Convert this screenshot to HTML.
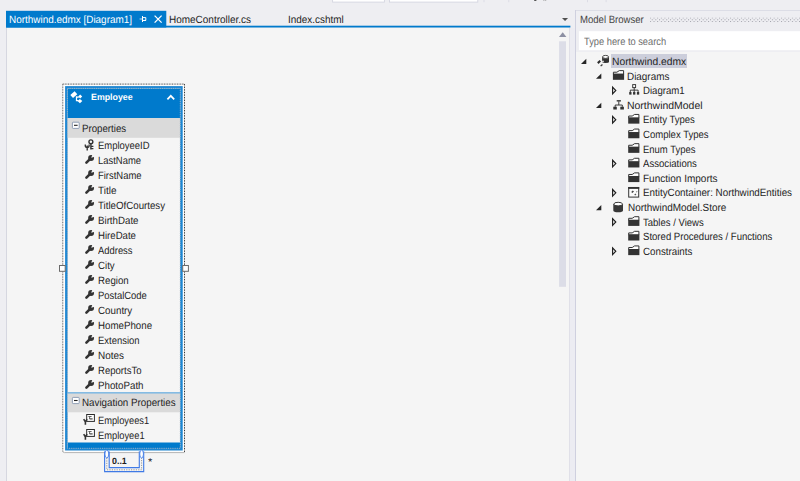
<!DOCTYPE html>
<html><head><meta charset="utf-8"><title>Northwind.edmx</title>
<style>
html,body{margin:0;padding:0;}
body{width:800px;height:481px;overflow:hidden;position:relative;background:#eeeef2;font-family:"Liberation Sans",sans-serif;}
.a{position:absolute;}
.t{position:absolute;transform-origin:0 0;text-rendering:geometricPrecision;white-space:pre;line-height:16px;height:16px;font-family:"Liberation Sans",sans-serif;}
svg{position:absolute;overflow:visible;}
</style></head><body>
<!-- top toolbar remnants -->
<svg style="left:0;top:0" width="800" height="6" viewBox="0 0 800 6">
<rect x="332.6" y="-1" width="51.8" height="3.1" fill="#fff" stroke="#d4d5e0" stroke-width="0.9"/>
<rect x="389.5" y="-1" width="88.3" height="3.1" fill="#fff" stroke="#d4d5e0" stroke-width="0.9"/>
<rect x="483.5" y="0" width="1" height="2.2" fill="#dcdce5"/>
<rect x="508.3" y="0" width="1" height="2.2" fill="#dcdce5"/>
<rect x="587" y="0" width="1" height="2.2" fill="#dcdce5"/>
<rect x="605.6" y="0" width="1" height="2.2" fill="#dcdce5"/>
<rect x="534.2" y="0" width="2.2" height="1" fill="#555"/>
<rect x="543.4" y="0" width="1" height="0.8" fill="#999"/><rect x="545.2" y="0" width="1" height="0.8" fill="#999"/>
</svg>

<!-- tab strip -->
<svg style="left:0;top:0" width="800" height="40" viewBox="0 0 800 40"><rect x="6" y="10.8" width="160.3" height="16.7" fill="#007acc"/><rect x="6" y="25.7" width="564.4" height="1.8" fill="#007acc"/></svg>
<!-- pin -->
<svg style="left:139px;top:15px" width="9" height="9" viewBox="0 0 9 9"><path d="M0.6 4H3.5" stroke="#cfe4f5" stroke-width="0.9" fill="none"/><path d="M3.5 1V7M3.5 2.6H6.8V5.4H3.5M3.5 5.5H6.8" stroke="#fff" stroke-width="1" fill="none"/></svg>
<!-- close -->
<svg style="left:154px;top:14.6px" width="9" height="9" viewBox="0 0 9 9"><path d="M0.6 0.6L7.6 7.6M7.6 0.6L0.6 7.6" stroke="#fff" stroke-width="1.3" fill="none"/></svg>
<!-- tab dropdown arrow -->
<svg style="left:561.6px;top:18px" width="7" height="4" viewBox="0 0 7 4"><path d="M0 0H6.1L3.05 3.1Z" fill="#505050"/></svg>

<!-- diagram surface -->
<div class="a" style="left:6px;top:28px;width:564px;height:453px;background:#f5f5f5"></div>
<div class="a" style="left:6px;top:28px;width:1px;height:453px;background:#d6d7e0"></div>
<!-- scrollbar -->
<svg style="left:559px;top:32px" width="8" height="5" viewBox="0 0 8 5"><path d="M0 5H7.4L3.7 0.3Z" fill="#8d90a3"/></svg>
<svg style="left:0;top:0" width="800" height="300" viewBox="0 0 800 300"><rect x="559.1" y="41.3" width="6.9" height="245.5" fill="#dcdde7"/></svg>
<!-- splitter -->
<div class="a" style="left:569px;top:28px;width:7px;height:453px;background:#ececf2"></div>
<div class="a" style="left:569px;top:28px;width:1px;height:453px;background:#e0e0e8"></div>
<div class="a" style="left:575px;top:10px;width:1px;height:471px;background:#cfd0df"></div>

<!-- model browser -->
<div class="a" style="left:576px;top:52px;width:224px;height:429px;background:#f5f5f5"></div>
<div class="a" style="left:576px;top:10px;width:224px;height:1px;background:#dcdde6"></div>
<svg style="left:0;top:0" width="800" height="60" viewBox="0 0 800 60"><rect x="578.9" y="31.2" width="222" height="19" fill="#fff"/></svg>
<!-- grip dots -->
<svg style="left:0;top:0" width="800" height="30" viewBox="0 0 800 30"><defs><pattern id="gp" width="4" height="4" patternUnits="userSpaceOnUse" patternTransform="translate(649.9 17.5) scale(0.91)"><rect x="0" y="0" width="1.1" height="1.1" fill="#9a9aa4"/><rect x="2" y="2" width="1.1" height="1.1" fill="#9a9aa4"/></pattern></defs><rect x="649.9" y="17.5" width="150.1" height="4.7" fill="url(#gp)"/></svg>
<!-- selected node -->
<div class="a" style="left:611px;top:54px;width:76px;height:14px;background:#cccedb"></div>

<!-- entity shape -->
<svg style="left:0;top:0" width="570" height="481" viewBox="0 0 570 481">
  <!-- selection -->
  <rect x="62.7" y="83.9" width="121.8" height="368.7" fill="#fdfdfd"/>
  <path d="M62.7 84.1H184.5" stroke="#c4c4c4" stroke-width="1"/>
  <path d="M62.7 84.1H184.5" stroke="#6a6a6a" stroke-width="1" stroke-dasharray="1.1 1.5"/>
  <path d="M62.75 84.1V451.5" stroke="#d2d2d2" stroke-width="1"/>
  <path d="M62.75 84.1V451.5" stroke="#777" stroke-width="1" stroke-dasharray="1.1 1.5"/>
  <path d="M184.5 84.1V452.6" stroke="#d8d8d8" stroke-width="1"/>
  <path d="M184.5 84.1V452.6" stroke="#333" stroke-width="1" stroke-dasharray="1.2 1.4"/>
  <path d="M62.75 451 Q62.75 452.6 64.4 452.6 H184.5" stroke="#b4b4b4" stroke-width="1" fill="none"/>
  <!-- body -->
  <rect x="65.1" y="86.1" width="117.6" height="364.4" fill="#1c86d2"/>
  <rect x="67.6" y="88.6" width="112.5" height="359.4" fill="#f5f5f5"/>
  <!-- header -->
  <rect x="67.6" y="88.6" width="112.5" height="29.4" fill="#007acc"/>
  <!-- properties header -->
  <rect x="67.6" y="118" width="112.5" height="19.8" fill="#dadada"/>
  <!-- nav separator + header -->
  <rect x="67.6" y="392.4" width="112.5" height="1.2" fill="#3a96d8"/>
  <rect x="67.6" y="393.6" width="112.5" height="18.7" fill="#dadada"/>
  <!-- bottom bar -->
  <rect x="67.6" y="442.5" width="112.5" height="5.5" fill="#007acc"/>
  <!-- inner dotted line -->
  <rect x="67.4" y="88.4" width="112.9" height="359.9" fill="none" stroke="#a9b6c2" stroke-width="0.9" stroke-dasharray="1.1 1.1"/>
  <!-- side handles -->
  <rect x="59.5" y="265.5" width="5.7" height="5.8" fill="#fff" stroke="#6a6a6a" stroke-width="1"/>
  <rect x="182.7" y="265.5" width="5.7" height="5.8" fill="#fff" stroke="#6a6a6a" stroke-width="1"/>
</svg>

<!-- icons -->
<svg style="left:0;top:0" width="800" height="481" viewBox="0 0 800 481">
<path d="M70.3 95 L74.6 91.3 L77.3 94.3 L73 98 Z" fill="#fff"/>
<path d="M78.2 96.5 L80.2 94.6 L82.2 96.5 L80.2 98.4 Z" fill="#fff"/>
<path d="M77.5 101.1 L79.9 99 L82.3 101.1 L79.9 103.2 Z" fill="#fff"/>
<path d="M76.5 96.2 V100.6 H78.4 M76.5 97 H78.8" stroke="#fff" stroke-width="1.25" fill="none"/>
<path d="M167.4 99.4 L170.8 95.8 L174.2 99.4" stroke="#fff" stroke-width="1.7" fill="none"/>
<rect x="72.4" y="122.2" width="6.8" height="6.2" rx="0.8" fill="#fff" stroke="#8496b0" stroke-width="0.9"/><path d="M74 125.3 H77.6" stroke="#222" stroke-width="1.1"/>
<rect x="72.4" y="397.4" width="6.8" height="6.2" rx="0.8" fill="#fff" stroke="#8496b0" stroke-width="0.9"/><path d="M74 400.5 H77.6" stroke="#222" stroke-width="1.1"/>
<circle cx="90.9" cy="141.8" r="1.95" stroke="#333" stroke-width="1.4" fill="none"/><path d="M90.9 143.7 V149.6 M90.9 146.4 H93.4 M90.9 148.6 H93.4" stroke="#333" stroke-width="1.4" fill="none"/><path d="M85.3 144.5 V145.8 Q85.3 147.6 87.2 147.6 Q89.1 147.6 89.1 145.8 V144.5 M87.2 145.4 V150.5" stroke="#333" stroke-width="1.35" fill="none"/>
<path d="M86.4 162.7 L90.4 158.7" stroke="#333" stroke-width="2.6" stroke-linecap="round" fill="none"/><circle cx="91.1" cy="158" r="2.95" fill="#333"/><path d="M91.1 157.8 L92.8 154 L95.4 156.4 Z" fill="#f5f5f5"/>
<path d="M86.4 177.7 L90.4 173.7" stroke="#333" stroke-width="2.6" stroke-linecap="round" fill="none"/><circle cx="91.1" cy="173" r="2.95" fill="#333"/><path d="M91.1 172.8 L92.8 169 L95.4 171.4 Z" fill="#f5f5f5"/>
<path d="M86.4 192.7 L90.4 188.7" stroke="#333" stroke-width="2.6" stroke-linecap="round" fill="none"/><circle cx="91.1" cy="188" r="2.95" fill="#333"/><path d="M91.1 187.8 L92.8 184 L95.4 186.4 Z" fill="#f5f5f5"/>
<path d="M86.4 207.7 L90.4 203.7" stroke="#333" stroke-width="2.6" stroke-linecap="round" fill="none"/><circle cx="91.1" cy="203" r="2.95" fill="#333"/><path d="M91.1 202.8 L92.8 199 L95.4 201.4 Z" fill="#f5f5f5"/>
<path d="M86.4 222.7 L90.4 218.7" stroke="#333" stroke-width="2.6" stroke-linecap="round" fill="none"/><circle cx="91.1" cy="218" r="2.95" fill="#333"/><path d="M91.1 217.8 L92.8 214 L95.4 216.4 Z" fill="#f5f5f5"/>
<path d="M86.4 237.7 L90.4 233.7" stroke="#333" stroke-width="2.6" stroke-linecap="round" fill="none"/><circle cx="91.1" cy="233" r="2.95" fill="#333"/><path d="M91.1 232.8 L92.8 229 L95.4 231.4 Z" fill="#f5f5f5"/>
<path d="M86.4 252.7 L90.4 248.7" stroke="#333" stroke-width="2.6" stroke-linecap="round" fill="none"/><circle cx="91.1" cy="248" r="2.95" fill="#333"/><path d="M91.1 247.8 L92.8 244 L95.4 246.4 Z" fill="#f5f5f5"/>
<path d="M86.4 267.7 L90.4 263.7" stroke="#333" stroke-width="2.6" stroke-linecap="round" fill="none"/><circle cx="91.1" cy="263" r="2.95" fill="#333"/><path d="M91.1 262.8 L92.8 259 L95.4 261.4 Z" fill="#f5f5f5"/>
<path d="M86.4 282.7 L90.4 278.7" stroke="#333" stroke-width="2.6" stroke-linecap="round" fill="none"/><circle cx="91.1" cy="278" r="2.95" fill="#333"/><path d="M91.1 277.8 L92.8 274 L95.4 276.4 Z" fill="#f5f5f5"/>
<path d="M86.4 297.7 L90.4 293.7" stroke="#333" stroke-width="2.6" stroke-linecap="round" fill="none"/><circle cx="91.1" cy="293" r="2.95" fill="#333"/><path d="M91.1 292.8 L92.8 289 L95.4 291.4 Z" fill="#f5f5f5"/>
<path d="M86.4 312.7 L90.4 308.7" stroke="#333" stroke-width="2.6" stroke-linecap="round" fill="none"/><circle cx="91.1" cy="308" r="2.95" fill="#333"/><path d="M91.1 307.8 L92.8 304 L95.4 306.4 Z" fill="#f5f5f5"/>
<path d="M86.4 327.7 L90.4 323.7" stroke="#333" stroke-width="2.6" stroke-linecap="round" fill="none"/><circle cx="91.1" cy="323" r="2.95" fill="#333"/><path d="M91.1 322.8 L92.8 319 L95.4 321.4 Z" fill="#f5f5f5"/>
<path d="M86.4 342.7 L90.4 338.7" stroke="#333" stroke-width="2.6" stroke-linecap="round" fill="none"/><circle cx="91.1" cy="338" r="2.95" fill="#333"/><path d="M91.1 337.8 L92.8 334 L95.4 336.4 Z" fill="#f5f5f5"/>
<path d="M86.4 357.7 L90.4 353.7" stroke="#333" stroke-width="2.6" stroke-linecap="round" fill="none"/><circle cx="91.1" cy="353" r="2.95" fill="#333"/><path d="M91.1 352.8 L92.8 349 L95.4 351.4 Z" fill="#f5f5f5"/>
<path d="M86.4 372.7 L90.4 368.7" stroke="#333" stroke-width="2.6" stroke-linecap="round" fill="none"/><circle cx="91.1" cy="368" r="2.95" fill="#333"/><path d="M91.1 367.8 L92.8 364 L95.4 366.4 Z" fill="#f5f5f5"/>
<path d="M86.4 387.7 L90.4 383.7" stroke="#333" stroke-width="2.6" stroke-linecap="round" fill="none"/><circle cx="91.1" cy="383" r="2.95" fill="#333"/><path d="M91.1 382.8 L92.8 379 L95.4 381.4 Z" fill="#f5f5f5"/>
<rect x="86.7" y="414.5" width="7.7" height="6.9" fill="#fff" stroke="#2a2a2a" stroke-width="1"/><path d="M88.4 416.5 H91.6 M89.6 416.6 V419" stroke="#555" stroke-width="0.9" fill="none"/><rect x="89.6" y="418.3" width="3" height="1.2" fill="#444"/><path d="M83.7 419.2 L85.4 422 L87.1 419.2 M85.4 421.6 V424.7" stroke="#333" stroke-width="1.6" fill="none"/>
<rect x="86.7" y="429.5" width="7.7" height="6.9" fill="#fff" stroke="#2a2a2a" stroke-width="1"/><path d="M88.4 431.5 H91.6 M89.6 431.6 V434" stroke="#555" stroke-width="0.9" fill="none"/><rect x="89.6" y="433.3" width="3" height="1.2" fill="#444"/><path d="M83.7 434.2 L85.4 437 L87.1 434.2 M85.4 436.6 V439.7" stroke="#333" stroke-width="1.6" fill="none"/>
<path d="M104.6 451.5 V471.6 H143.7 V451.5 M109.2 451.5 V467.6 H139.3 V451.5" stroke="#3f7ae6" stroke-width="1.1" fill="none"/><path d="M106.8 458 V469.8 H141.6 V458" stroke="#999" stroke-width="1" stroke-dasharray="1.2 1.2" fill="none"/><ellipse cx="106.8" cy="454" rx="1.9" ry="3.9" fill="#fff" stroke="#3f7ae6" stroke-width="0.9"/><ellipse cx="141.6" cy="454" rx="1.9" ry="3.9" fill="#fff" stroke="#3f7ae6" stroke-width="0.9"/>
<path d="M586.3 58.8 V64.1 H581 Z" fill="#262626"/>
<path d="M602.1 56.9 V61.7 A3.45 1.2 0 0 0 609 61.7 V56.9 Z" fill="#333"/><ellipse cx="605.55" cy="56.9" rx="3" ry="1.5" fill="#fff" stroke="#333" stroke-width="0.9"/><path d="M597.1 62.3 L599.6 60 L601 61.6 L598.5 64 Z" fill="#2c2c2c"/><path d="M600.2 65.7 L602 64.1 L602.9 65 L601.1 66.5 Z" fill="#3a3a3a"/><path d="M601.7 61.5 L603.1 60.3 L604.1 61.7 L602.7 62.8 Z" fill="#ddd"/>
<path d="M601.3 73.41 V78.71 H596 Z" fill="#262626"/>
<path d="M613.4 74.21 V72.21 H616.9 L619.3 70.61 H623.6 V74.21 Z" fill="#fff" stroke="#333" stroke-width="1"/><rect x="612.9" y="73.81" width="11.2" height="6" fill="#333"/>
<path d="M612.6 87.22 L615.8 90.52 L612.6 93.82 Z" fill="none" stroke="#1e1e1e" stroke-width="1.15"/>
<rect x="632.7" y="84.62" width="2.9" height="3" fill="#fff" stroke="#333" stroke-width="0.95"/><path d="M634.2 87.62 V90.12 M630.3 92.12 V90.12 H638.1 V92.12 M634.2 90.12 V92.12" stroke="#333" stroke-width="0.95" fill="none"/><rect x="629.2" y="92.02" width="2.3" height="2.6" fill="#333"/><rect x="633.05" y="92.02" width="2.3" height="2.6" fill="#333"/><rect x="636.9" y="92.02" width="2.3" height="2.6" fill="#333"/>
<path d="M601.3 102.63 V107.93 H596 Z" fill="#262626"/>
<rect x="616.7" y="100.13" width="4.2" height="1.4" fill="#333"/><path d="M618.8 101.33 V105.03 M615.2 106.83 V105.03 H622.3 V106.83" stroke="#333" stroke-width="0.95" fill="none"/><rect x="613.3" y="106.73" width="3.5" height="2.8" fill="#333"/><rect x="620.3" y="106.73" width="3.6" height="2.8" fill="#333"/>
<path d="M612.6 116.44 L615.8 119.74 L612.6 123.04 Z" fill="none" stroke="#1e1e1e" stroke-width="1.15"/>
<path d="M628.7 118.04 V116.04 H632.2 L634.6 114.44 H638.9 V118.04 Z" fill="#fff" stroke="#333" stroke-width="1"/><rect x="628.2" y="117.64" width="11.2" height="6" fill="#333"/>
<path d="M628.7 132.65 V130.65 H632.2 L634.6 129.05 H638.9 V132.65 Z" fill="#fff" stroke="#333" stroke-width="1"/><rect x="628.2" y="132.25" width="11.2" height="6" fill="#333"/>
<path d="M628.7 147.26 V145.26 H632.2 L634.6 143.66 H638.9 V147.26 Z" fill="#fff" stroke="#333" stroke-width="1"/><rect x="628.2" y="146.86" width="11.2" height="6" fill="#333"/>
<path d="M612.6 160.27 L615.8 163.57 L612.6 166.87 Z" fill="none" stroke="#1e1e1e" stroke-width="1.15"/>
<path d="M628.7 161.87 V159.87 H632.2 L634.6 158.27 H638.9 V161.87 Z" fill="#fff" stroke="#333" stroke-width="1"/><rect x="628.2" y="161.47" width="11.2" height="6" fill="#333"/>
<path d="M628.7 176.48 V174.48 H632.2 L634.6 172.88 H638.9 V176.48 Z" fill="#fff" stroke="#333" stroke-width="1"/><rect x="628.2" y="176.08" width="11.2" height="6" fill="#333"/>
<path d="M612.6 189.49 L615.8 192.79 L612.6 196.09 Z" fill="none" stroke="#1e1e1e" stroke-width="1.15"/>
<rect x="628.7" y="187.49" width="10" height="9.6" fill="#fbfbfb" stroke="#333" stroke-width="1"/><rect x="628.2" y="186.99" width="11" height="1.9" fill="#333"/><path d="M631.2 191.99 L632.8 190.49 L634 191.49 L632.4 192.99 Z" fill="#444"/><path d="M634.2 194.79 L635.4 193.59 L636.4 194.39 L635.2 195.59 Z" fill="#555"/><path d="M636 191.99 L636.9 190.89 L637.5 191.49 L636.6 192.59 Z" fill="#666"/>
<path d="M601.3 204.9 V210.2 H596 Z" fill="#262626"/>
<path d="M613.3 204.1 V210.5 A4.85 1.8 0 0 0 623 210.5 V204.1 Z" fill="#383838"/><ellipse cx="618.15" cy="204.1" rx="4.35" ry="1.8" fill="#fff" stroke="#383838" stroke-width="1"/>
<path d="M612.6 218.71 L615.8 222.01 L612.6 225.31 Z" fill="none" stroke="#1e1e1e" stroke-width="1.15"/>
<path d="M628.7 220.31 V218.31 H632.2 L634.6 216.71 H638.9 V220.31 Z" fill="#fff" stroke="#333" stroke-width="1"/><rect x="628.2" y="219.91" width="11.2" height="6" fill="#333"/>
<path d="M628.7 234.92 V232.92 H632.2 L634.6 231.32 H638.9 V234.92 Z" fill="#fff" stroke="#333" stroke-width="1"/><rect x="628.2" y="234.52" width="11.2" height="6" fill="#333"/>
<path d="M612.6 247.93 L615.8 251.23 L612.6 254.53 Z" fill="none" stroke="#1e1e1e" stroke-width="1.15"/>
<path d="M628.7 249.53 V247.53 H632.2 L634.6 245.93 H638.9 V249.53 Z" fill="#fff" stroke="#333" stroke-width="1"/><rect x="628.2" y="249.13" width="11.2" height="6" fill="#333"/>
</svg>

<!-- text -->
<span class="t" style="left:8.65px;top:12.0px;font-size:10.5px;transform:scaleX(0.9453);color:#ffffff;">Northwind.edmx [Diagram1]</span>
<span class="t" style="left:168.50px;top:12.0px;font-size:10.5px;transform:scaleX(0.9495);color:#1e1e1e;">HomeController.cs</span>
<span class="t" style="left:287.50px;top:12.0px;font-size:10.5px;transform:scaleX(0.9464);color:#1e1e1e;">Index.cshtml</span>
<span class="t" style="left:579.65px;top:12.0px;font-size:10.5px;transform:scaleX(0.9110);color:#444444;">Model Browser</span>
<span class="t" style="left:583.50px;top:34.0px;font-size:10.5px;transform:scaleX(0.8846);color:#6d6d6d;">Type here to search</span>
<span class="t" style="left:90.65px;top:89.0px;font-size:9px;transform:scaleX(0.9805);color:#ffffff;font-weight:bold;">Employee</span>
<span class="t" style="left:81.70px;top:121.0px;font-size:10.5px;transform:scaleX(0.9222);color:#1e1e1e;">Properties</span>
<span class="t" style="left:97.60px;top:138.0px;font-size:10.5px;transform:scaleX(0.9022);color:#1e1e1e;">EmployeeID</span>
<span class="t" style="left:97.60px;top:153.0px;font-size:10.5px;transform:scaleX(0.8990);color:#1e1e1e;">LastName</span>
<span class="t" style="left:97.60px;top:168.0px;font-size:10.5px;transform:scaleX(0.8990);color:#1e1e1e;">FirstName</span>
<span class="t" style="left:97.60px;top:183.0px;font-size:10.5px;transform:scaleX(0.9491);color:#1e1e1e;">Title</span>
<span class="t" style="left:97.60px;top:198.0px;font-size:10.5px;transform:scaleX(0.9244);color:#1e1e1e;">TitleOfCourtesy</span>
<span class="t" style="left:97.60px;top:213.0px;font-size:10.5px;transform:scaleX(0.9251);color:#1e1e1e;">BirthDate</span>
<span class="t" style="left:97.60px;top:228.0px;font-size:10.5px;transform:scaleX(0.9165);color:#1e1e1e;">HireDate</span>
<span class="t" style="left:97.60px;top:243.0px;font-size:10.5px;transform:scaleX(0.8967);color:#1e1e1e;">Address</span>
<span class="t" style="left:97.60px;top:258.0px;font-size:10.5px;transform:scaleX(0.9208);color:#1e1e1e;">City</span>
<span class="t" style="left:97.60px;top:273.0px;font-size:10.5px;transform:scaleX(0.9225);color:#1e1e1e;">Region</span>
<span class="t" style="left:97.60px;top:288.0px;font-size:10.5px;transform:scaleX(0.9003);color:#1e1e1e;">PostalCode</span>
<span class="t" style="left:97.60px;top:303.0px;font-size:10.5px;transform:scaleX(0.9317);color:#1e1e1e;">Country</span>
<span class="t" style="left:97.60px;top:318.0px;font-size:10.5px;transform:scaleX(0.9268);color:#1e1e1e;">HomePhone</span>
<span class="t" style="left:97.60px;top:333.0px;font-size:10.5px;transform:scaleX(0.9000);color:#1e1e1e;">Extension</span>
<span class="t" style="left:97.60px;top:348.0px;font-size:10.5px;transform:scaleX(0.9460);color:#1e1e1e;">Notes</span>
<span class="t" style="left:97.60px;top:363.0px;font-size:10.5px;transform:scaleX(0.9096);color:#1e1e1e;">ReportsTo</span>
<span class="t" style="left:97.60px;top:378.0px;font-size:10.5px;transform:scaleX(0.9287);color:#1e1e1e;">PhotoPath</span>
<span class="t" style="left:81.50px;top:395.0px;font-size:10.5px;transform:scaleX(0.9326);color:#1e1e1e;">Navigation Properties</span>
<span class="t" style="left:97.60px;top:413.0px;font-size:10.5px;transform:scaleX(0.8845);color:#1e1e1e;">Employees1</span>
<span class="t" style="left:97.60px;top:428.0px;font-size:10.5px;transform:scaleX(0.8863);color:#1e1e1e;">Employee1</span>
<span class="t" style="left:111.55px;top:453.0px;font-size:9px;transform:scaleX(0.9850);color:#1e1e1e;font-weight:bold;">0..1</span>
<span class="t" style="left:147.50px;top:455.0px;font-size:10px;transform:scaleX(1.1075);color:#1e1e1e;">*</span>
<span class="t" style="left:611.55px;top:54.0px;font-size:10.5px;transform:scaleX(0.9784);color:#1e1e1e;">Northwind.edmx</span>
<span class="t" style="left:626.70px;top:69.0px;font-size:10.5px;transform:scaleX(0.9420);color:#1e1e1e;">Diagrams</span>
<span class="t" style="left:642.65px;top:83.0px;font-size:10.5px;transform:scaleX(0.9161);color:#1e1e1e;">Diagram1</span>
<span class="t" style="left:626.70px;top:98.0px;font-size:10.5px;transform:scaleX(0.9961);color:#1e1e1e;">NorthwindModel</span>
<span class="t" style="left:642.65px;top:112.0px;font-size:10.5px;transform:scaleX(0.9103);color:#1e1e1e;">Entity Types</span>
<span class="t" style="left:642.65px;top:127.0px;font-size:10.5px;transform:scaleX(0.9087);color:#1e1e1e;">Complex Types</span>
<span class="t" style="left:642.65px;top:142.0px;font-size:10.5px;transform:scaleX(0.9025);color:#1e1e1e;">Enum Types</span>
<span class="t" style="left:642.65px;top:156.0px;font-size:10.5px;transform:scaleX(0.9143);color:#1e1e1e;">Associations</span>
<span class="t" style="left:642.65px;top:171.0px;font-size:10.5px;transform:scaleX(0.9526);color:#1e1e1e;">Function Imports</span>
<span class="t" style="left:642.65px;top:185.0px;font-size:10.5px;transform:scaleX(0.9352);color:#1e1e1e;">EntityContainer: NorthwindEntities</span>
<span class="t" style="left:627.65px;top:200.0px;font-size:10.5px;transform:scaleX(0.9462);color:#1e1e1e;">NorthwindModel.Store</span>
<span class="t" style="left:642.65px;top:215.0px;font-size:10.5px;transform:scaleX(0.9068);color:#1e1e1e;">Tables / Views</span>
<span class="t" style="left:642.65px;top:229.0px;font-size:10.5px;transform:scaleX(0.9117);color:#1e1e1e;">Stored Procedures / Functions</span>
<span class="t" style="left:642.65px;top:244.0px;font-size:10.5px;transform:scaleX(0.9283);color:#1e1e1e;">Constraints</span>
</body></html>
